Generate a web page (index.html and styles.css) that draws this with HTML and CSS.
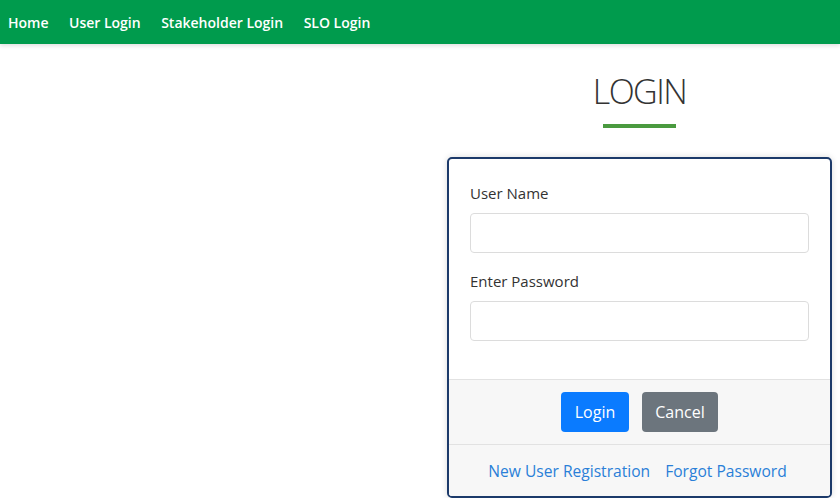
FILE: index.html
```html
<!DOCTYPE html>
<html lang="en">
<head>
<meta charset="utf-8">
<title>Login</title>
<link rel="stylesheet" href="styles.css">
</head>
<body>
<nav class="navbar">
  <a class="nav-link" href="#">Home</a>
  <a class="nav-link" href="#">User Login</a>
  <a class="nav-link" href="#">Stakeholder Login</a>
  <a class="nav-link" href="#">SLO Login</a>
</nav>
<main class="page">
  <section class="login-col">
    <h1 class="title">LOGIN</h1>
    <div class="title-bar"></div>
    <form class="card">
      <div class="card-body">
        <div class="form-group">
          <label class="label" for="uname">User Name</label>
          <input class="input" id="uname" type="text">
        </div>
        <div class="form-group">
          <label class="label" for="pwd">Enter Password</label>
          <input class="input" id="pwd" type="password">
        </div>
      </div>
      <div class="card-actions">
        <button class="btn btn-primary" type="button">Login</button>
        <button class="btn btn-secondary" type="button">Cancel</button>
      </div>
      <div class="card-links">
        <a class="link" href="#">New User Registration</a>
        <a class="link" href="#">Forgot Password</a>
      </div>
    </form>
  </section>
</main>
</body>
</html>
```
FILE: styles.css
```css
* { box-sizing: border-box; }
html, body { margin: 0; padding: 0; background: #fff; }
body {
  font-family: "Open Sans", "Noto Sans", "Liberation Sans", sans-serif;
  color: #333;
  font-size: 15px;
}
.navbar {
  height: 44px;
  background: #009b4d;
  display: flex;
  align-items: center;
  padding: 0 8px;
  gap: 20.5px;
  box-shadow: 0 2px 4px rgba(0,0,0,0.12);
}
.nav-link {
  color: #fff;
  font-weight: 600;
  font-size: 14px;
  text-decoration: none;
  letter-spacing: 0;
}
.page {
  display: flex;
  justify-content: flex-end;
  padding-right: 8px;
}
.login-col {
  width: 385px;
  display: flex;
  flex-direction: column;
  align-items: center;
}
.title {
  margin: 25px 0 0;
  font-size: 34px;
  line-height: 44px;
  font-weight: 300;
  color: #333;
  letter-spacing: -1.5px;
}
.title-bar {
  width: 73px;
  height: 4px;
  background: #4a9a3f;
  margin-top: 11px;
}
.card {
  width: 385px;
  margin-top: 29px;
  border: 2px solid #1c3a6a;
  border-radius: 5px;
  box-shadow: 0 0 6px rgba(0,0,0,0.15);
  background: #fff;
  overflow: hidden;
}
.card-body {
  padding: 22px 21px 22px;
}
.form-group {
  display: flex;
  flex-direction: column;
  margin-bottom: 16px;
}
.label {
  font-size: 15px;
  line-height: 24px;
  margin-bottom: 8px;
  color: #333;
}
.input {
  height: 40px;
  border: 1px solid #dcdcdc;
  border-radius: 4px;
  font: inherit;
}
.card-actions {
  background: #f7f7f7;
  border-top: 1px solid #e2e2e2;
  display: flex;
  justify-content: center;
  gap: 13px;
  padding: 12px 0;
}
.btn {
  height: 40px;
  border: none;
  border-radius: 4px;
  font-family: inherit;
  font-size: 16px;
  color: #fff;
  padding: 0 13px;
}
.btn-primary { background: #0a7bff; min-width: 68px; }
.btn-secondary { background: #6c757d; min-width: 76px; }
.card-links {
  background: #f7f7f7;
  border-top: 1px solid #e2e2e2;
  display: flex;
  justify-content: center;
  gap: 15px;
  padding: 14px 4px 14px 0;
  height: 52px;
}
.link {
  color: #2a7fd8;
  text-decoration: none;
  font-size: 15.6px;
  line-height: 24px;
}
```
